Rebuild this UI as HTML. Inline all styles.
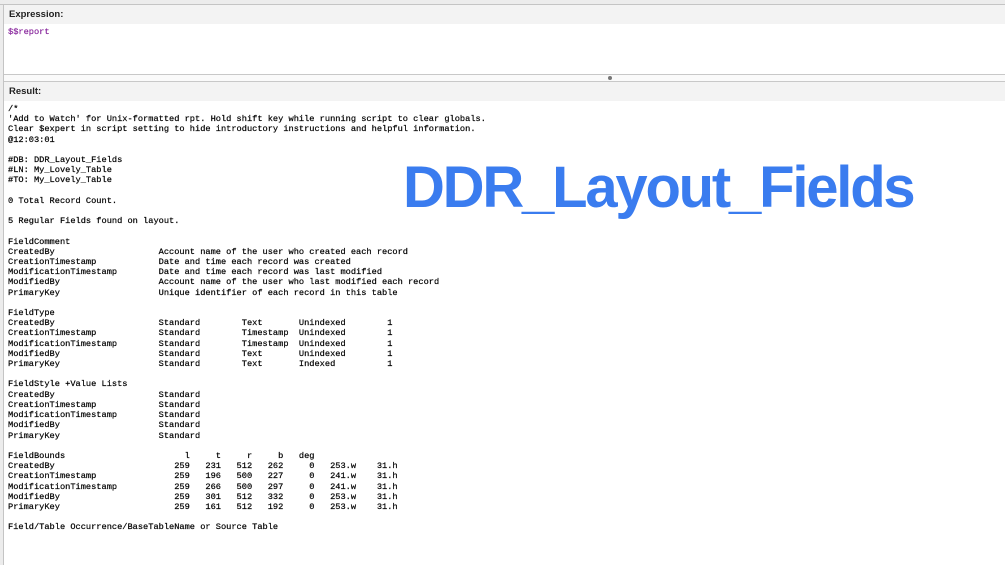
<!DOCTYPE html>
<html><head><meta charset="utf-8"><style>
html,body{margin:0;padding:0;width:1005px;height:565px;overflow:hidden;background:#fff;position:relative}
.a{position:absolute}
.hdr{font:bold 9.5px "Liberation Sans",sans-serif;color:#222;padding-left:5px;box-sizing:border-box;background:#f3f3f3}
pre{margin:0;font:8.67px/10.2px "Liberation Mono",monospace;color:#000;-webkit-text-stroke:0.2px #000}
</style></head><body>
<div class="a" style="left:0;top:0;width:1005px;height:4px;background:#ececec"></div>
<div class="a" style="left:0;top:4px;width:1005px;height:1px;background:#c4c4c4"></div>
<div class="a" style="left:0;top:5px;width:3px;height:560px;background:#ececec"></div>
<div class="a" style="left:3px;top:5px;width:1px;height:560px;background:#c4c4c4"></div>
<div class="a hdr" style="left:4px;top:5px;width:1001px;height:19px;line-height:20px">Expression:</div>
<div class="a" style="left:8px;top:27px;font:8.67px 'Liberation Mono',monospace;color:#8a2a9e;-webkit-text-stroke:0.2px #8a2a9e">$$report</div>
<div class="a" style="left:4px;top:74px;width:1001px;height:1px;background:#c8c8c8"></div>
<div class="a" style="left:4px;top:75px;width:1001px;height:6px;background:#fafafa"></div>
<div class="a" style="left:608px;top:76px;width:4px;height:4px;border-radius:50%;background:#777"></div>
<div class="a" style="left:4px;top:81px;width:1001px;height:1px;background:#c8c8c8"></div>
<div class="a hdr" style="left:4px;top:82px;width:1001px;height:19px;line-height:20px">Result:</div>
<pre class="a" style="left:8px;top:104px">/*
'Add to Watch' for Unix-formatted rpt. Hold shift key while running script to clear globals.
Clear $expert in script setting to hide introductory instructions and helpful information.
@12:03:01

#DB: DDR_Layout_Fields
#LN: My_Lovely_Table
#TO: My_Lovely_Table

0 Total Record Count.

5 Regular Fields found on layout.

FieldComment
CreatedBy                    Account name of the user who created each record
CreationTimestamp            Date and time each record was created
ModificationTimestamp        Date and time each record was last modified
ModifiedBy                   Account name of the user who last modified each record
PrimaryKey                   Unique identifier of each record in this table

FieldType
CreatedBy                    Standard        Text       Unindexed        1
CreationTimestamp            Standard        Timestamp  Unindexed        1
ModificationTimestamp        Standard        Timestamp  Unindexed        1
ModifiedBy                   Standard        Text       Unindexed        1
PrimaryKey                   Standard        Text       Indexed          1

FieldStyle +Value Lists
CreatedBy                    Standard
CreationTimestamp            Standard
ModificationTimestamp        Standard
ModifiedBy                   Standard
PrimaryKey                   Standard

FieldBounds                       l     t     r     b   deg
CreatedBy                       259   231   512   262     0   253.w    31.h
CreationTimestamp               259   196   500   227     0   241.w    31.h
ModificationTimestamp           259   266   500   297     0   241.w    31.h
ModifiedBy                      259   301   512   332     0   253.w    31.h
PrimaryKey                      259   161   512   192     0   253.w    31.h

Field/Table Occurrence/BaseTableName or Source Table</pre>
<div class="a" style="left:403px;top:155px;font:bold 58px/66px 'Liberation Sans',sans-serif;letter-spacing:-2.2px;color:#3a7cef;white-space:nowrap">DDR_Layout_Fields</div>
</body></html>
